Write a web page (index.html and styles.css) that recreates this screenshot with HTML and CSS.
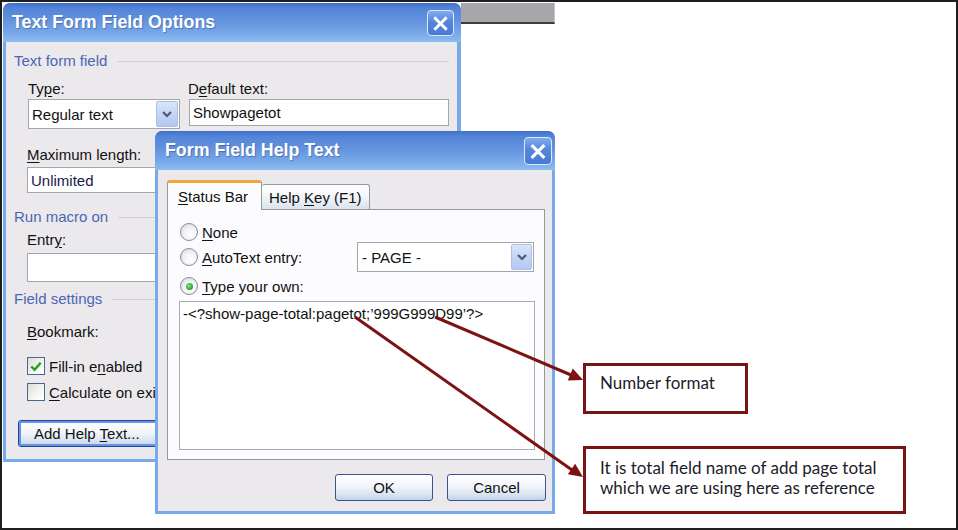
FILE: index.html
```html
<!DOCTYPE html>
<html lang="en">
<head>
<meta charset="utf-8">
<title>Text Form Field Options</title>
<link rel="stylesheet" href="styles.css">
</head>
<body>
<div class="screen">
  <div class="bg-window"></div>

  <section class="win win-options">
    <header class="titlebar">
      <h1 class="title">Text Form Field Options</h1>
      <span class="close"><svg width="27" height="26" viewBox="0 0 27 26"><path d="M8 7 L19 18 M19 7 L8 18" stroke="#fff" stroke-width="3.2" stroke-linecap="square"/></svg></span>
    </header>
    <div class="client options-client">
      <div class="group g-text">Text form field</div>
      <div class="row row-type">
        <div class="field field-type">
          <label class="lbl">Ty<u>p</u>e:</label>
          <div class="combo combo-type">
            <span class="combo-text">Regular text</span>
            <span class="drop"><svg width="12" height="8" viewBox="0 0 12 8"><path d="M2 2 L6 6 L10 2" fill="none" stroke="#4b5a78" stroke-width="2.2"/></svg></span>
          </div>
        </div>
        <div class="field field-default">
          <label class="lbl">D<u>e</u>fault text:</label>
          <div class="input input-default">Showpagetot</div>
        </div>
      </div>
      <label class="lbl lbl-max"><u>M</u>aximum length:</label>
      <div class="input input-max">Unlimited</div>
      <div class="group g-macro">Run macro on</div>
      <label class="lbl lbl-entry">Entr<u>y</u>:</label>
      <div class="input input-entry"></div>
      <div class="group g-field">Field settings</div>
      <label class="lbl lbl-book"><u>B</u>ookmark:</label>
      <div class="check-row cr-fill">
        <span class="checkbox"><svg width="17" height="17" viewBox="0 0 17 17"><path d="M3.5 8.5 L7 12 L13.5 4.5" fill="none" stroke="#1f9f1f" stroke-width="2.6"/></svg></span>
        <span class="check-label">Fill-in e<u>n</u>abled</span>
      </div>
      <div class="check-row cr-calc">
        <span class="checkbox"></span>
        <span class="check-label"><u>C</u>alculate on exit</span>
      </div>
      <div class="btn btn-default btn-help"><span>Add Help <u>T</u>ext...</span></div>
    </div>
  </section>

  <section class="win win-help">
    <header class="titlebar">
      <h1 class="title">Form Field Help Text</h1>
      <span class="close"><svg width="27" height="27" viewBox="0 0 27 27"><path d="M8 8 L19 19 M19 8 L8 19" stroke="#fff" stroke-width="3.2" stroke-linecap="square"/></svg></span>
    </header>
    <div class="client help-client">
      <div class="tabs">
        <div class="tab tab-active"><span><u>S</u>tatus Bar</span></div>
        <div class="tab tab-idle"><span>Help <u>K</u>ey (F1)</span></div>
      </div>
      <div class="panel">
        <div class="radio-row rr-none">
          <span class="radio"></span>
          <span class="radio-label"><u>N</u>one</span>
        </div>
        <div class="radio-row rr-auto">
          <span class="radio"></span>
          <span class="radio-label"><u>A</u>utoText entry:</span>
          <div class="combo combo-page">
            <span class="combo-text">- PAGE -</span>
            <span class="drop"><svg width="12" height="8" viewBox="0 0 12 8"><path d="M2 2 L6 6 L10 2" fill="none" stroke="#4b5a78" stroke-width="2.2"/></svg></span>
          </div>
        </div>
        <div class="radio-row rr-own">
          <span class="radio radio-on"><span class="dot"></span></span>
          <span class="radio-label"><u>T</u>ype your own:</span>
        </div>
        <div class="textarea">-&lt;?show-page-total:pagetot;’999G999D99’?&gt;</div>
      </div>
      <div class="buttons">
        <div class="btn btn-ok"><span>OK</span></div>
        <div class="btn btn-cancel"><span>Cancel</span></div>
      </div>
    </div>
  </section>

  <svg class="arrows" width="954" height="526" viewBox="0 0 954 526">
    <line x1="433" y1="315" x2="569" y2="373" stroke="#7c1212" stroke-width="3"/>
    <polygon points="581,378 565.8,378.5 570.8,366.5" fill="#7c1212"/>
    <line x1="353" y1="315" x2="570" y2="468" stroke="#7c1212" stroke-width="3"/>
    <polygon points="581,475 565.8,472.2 573.2,461.8" fill="#7c1212"/>
  </svg>

  <div class="note note-format">Number format</div>
  <div class="note note-total">It is total field name of add page total<br>which we are using here as reference</div>
</div>
</body>
</html>
```

FILE: styles.css
```css
* { box-sizing: border-box; }

body {
  margin: 0;
  background: #fff;
  font-family: "Liberation Sans", Arial, sans-serif;
}

u { text-decoration: underline; text-underline-offset: 2px; }

.screen {
  position: relative;
  width: 958px;
  height: 530px;
  border: 2px solid #1e1e1e;
  background: #fff;
  overflow: hidden;
}

.bg-window {
  position: absolute;
  left: 459px;
  top: 1px;
  width: 94px;
  height: 21px;
  background: #a7a7ab;
  border-bottom: 2px solid #3c3c3c;
  border-right: 1px solid #c9c9cc;
}

/* ---------- windows ---------- */
.win {
  position: absolute;
  display: flex;
  flex-direction: column;
  background: #78aaea;
  border-radius: 7px 7px 0 0;
}

.win-options { left: 1px; top: 1px; width: 458px; height: 459px; }
.win-help { left: 153px; top: 129px; width: 400px; height: 383px; }

.titlebar {
  height: 39px;
  flex: none;
  display: flex;
  align-items: center;
  justify-content: space-between;
  padding: 0 7px 0 9px;
  border-radius: 7px 7px 0 0;
  background: linear-gradient(#3f6fc9 0%, #5283d7 12%, #6393df 45%, #7aaae8 80%, #8cbcf0 100%);
}
.win-help .titlebar { padding: 0 3px 0 10px; }

.title {
  margin: 0;
  font-size: 17.8px;
  font-weight: bold;
  color: #fff;
  text-shadow: 1px 1px 1px rgba(20, 40, 110, 0.35);
}

.close {
  display: flex;
  width: 27px;
  height: 26px;
  border: 1px solid #dbe8fb;
  border-radius: 4px;
  background: linear-gradient(#82acec, #5585da 45%, #4a7bd4);
}
.win-help .close { width: 28px; height: 28px; }

.client {
  flex: 1;
  margin: 0 4px 3px 3px;
  background: #ece9ec;
}
.win-help .client { margin: 0 3px 3px 3px; }

/* ---------- options dialog ---------- */
.options-client {
  display: flex;
  flex-direction: column;
  align-items: flex-start;
  padding-top: 10px;
  font-size: 15px;
  color: #111;
}

.group {
  align-self: stretch;
  display: flex;
  align-items: center;
  height: 18px;
  line-height: 18px;
  margin: 0 8px 0 8px;
  color: #4a66b5;
}
.group::after {
  content: "";
  flex: 1;
  height: 1px;
  margin-left: 10px;
  background: #d2cfd6;
}
.g-macro { margin-top: 15px; }
.g-field { margin-top: 8px; }

.lbl {
  display: block;
  height: 18px;
  line-height: 18px;
  margin-left: 21px;
}

.row { display: flex; margin-top: 10px; margin-left: 22px; }
.row .lbl { margin-left: 0; }
.field-type { width: 152px; }
.field-default { margin-left: 9px; }
.field-default .lbl { margin-left: -1px; }

.combo {
  display: flex;
  align-items: center;
  justify-content: space-between;
  height: 30px;
  background: #fff;
  border: 1px solid #a3a6ad;
  padding: 1px 1px 1px 3px;
  color: #111;
}
.combo-type { margin-top: 1px; width: 152px; }

.drop {
  display: flex;
  align-items: center;
  justify-content: center;
  width: 22px;
  height: 100%;
  border: 1px solid #aebfe0;
  border-radius: 2px;
  background: linear-gradient(#dbe6fb, #c3d4f6 50%, #b3c8f1);
}

.input {
  height: 27px;
  line-height: 25px;
  padding-left: 3px;
  background: #fff;
  border: 1px solid #a3a6ad;
  color: #111;
}
.input-default { margin-top: 1px; width: 260px; }
.lbl-max { margin-top: 17px; }
.input-max { margin-top: 3px; margin-left: 21px; width: 153px; height: 26px; color: #1a1a4a; }
.lbl-entry { margin-top: 5px; }
.input-entry { margin-top: 4px; margin-left: 21px; width: 153px; height: 29px; }
.lbl-book { margin-top: 15px; }

.check-row {
  display: flex;
  align-items: center;
  height: 18px;
  margin-left: 21px;
}
.cr-fill { margin-top: 16px; }
.cr-calc { margin-top: 8px; }

.checkbox {
  width: 18px;
  height: 18px;
  border: 1px solid #4a6890;
  background: linear-gradient(135deg, #dcdcd8, #f6f6f4 60%, #fff);
  display: flex;
  align-items: center;
  justify-content: center;
}
.check-label { margin-left: 4px; }

.btn {
  display: flex;
  align-items: center;
  justify-content: center;
  height: 27px;
  font-size: 15px;
  color: #111;
  border: 1px solid #3a5688;
  border-radius: 3px;
  background: linear-gradient(#ffffff, #f2f5fa 45%, #dce5f3 75%, #c3d1e9);
}
.btn-help {
  margin-top: 19px;
  margin-left: 12px;
  width: 170px;
  justify-content: flex-start;
  padding-left: 15px;
  border: 1px solid #24449a;
  box-shadow: inset 0 0 0 2px #6595e6;
}

/* ---------- help dialog ---------- */
.help-client {
  display: flex;
  flex-direction: column;
  font-size: 15px;
  color: #111;
}

.tabs {
  display: flex;
  align-items: flex-end;
  height: 30px;
  margin: 10px 0 0 9px;
  position: relative;
  z-index: 1;
}
.tab {
  display: flex;
  align-items: center;
  border: 1px solid #919b9c;
  border-bottom: none;
  border-radius: 3px 3px 0 0;
}
.tab-active {
  width: 95px;
  height: 30px;
  padding-left: 10px;
  background: #fcfcfe;
  border-top: 3px solid #f2a43d;
}
.tab-idle {
  width: 108px;
  height: 25px;
  margin-bottom: 1px;
  padding-left: 7px;
  border-left: none;
  background: linear-gradient(#ffffff, #f1f4f9 50%, #dbe2ee);
}

.panel {
  display: flex;
  flex-direction: column;
  margin: -1px 0 0 9px;
  width: 378px;
  height: 251px;
  padding: 12px 9px 0 11px;
  border: 1px solid #919b9c;
  background: #fcfcfe;
}

.radio-row {
  display: flex;
  align-items: center;
  height: 20px;
}
.rr-auto { height: 30px; }
.rr-own { margin-top: 4px; }

.radio {
  width: 18px;
  height: 18px;
  margin-left: 1px;
  border: 1px solid #7f8ea6;
  border-radius: 50%;
  background: radial-gradient(circle at 60% 65%, #ffffff 0%, #f3f3f3 45%, #d3d3d3 100%);
  display: flex;
  align-items: center;
  justify-content: center;
}
.dot {
  width: 7px;
  height: 7px;
  border-radius: 50%;
  background: radial-gradient(circle at 40% 40%, #8ee08e, #21a321 70%);
}
.radio-label { margin-left: 4px; }

.combo-page {
  width: 177px;
  margin-left: auto;
  margin-right: 1px;
  padding-left: 4px;
}
.combo-page .drop { width: 21px; }

.textarea {
  margin-top: 5px;
  width: 356px;
  height: 149px;
  border: 1px solid #a6acb4;
  background: #fff;
  padding: 3px 3px;
  line-height: 18px;
  color: #111;
  white-space: nowrap;
}

.buttons {
  display: flex;
  justify-content: flex-end;
  gap: 14px;
  margin-top: 14px;
  padding-right: 6px;
}
.btn-ok { width: 98px; }
.btn-cancel { width: 99px; }

/* ---------- annotations ---------- */
.arrows {
  position: absolute;
  left: 0;
  top: 0;
}

.note {
  position: absolute;
  border: 3px solid #7a1313;
  background: #fff;
  font-family: "Lato", "Liberation Sans", sans-serif;
  font-size: 17px;
  line-height: 20px;
  color: #1c1c2a;
  padding-left: 14px;
}
.note-format {
  left: 581px;
  top: 361px;
  width: 165px;
  height: 51px;
  padding-top: 7px;
}
.note-total {
  left: 581px;
  top: 444px;
  width: 323px;
  height: 68px;
  padding-top: 9px;
}
```
